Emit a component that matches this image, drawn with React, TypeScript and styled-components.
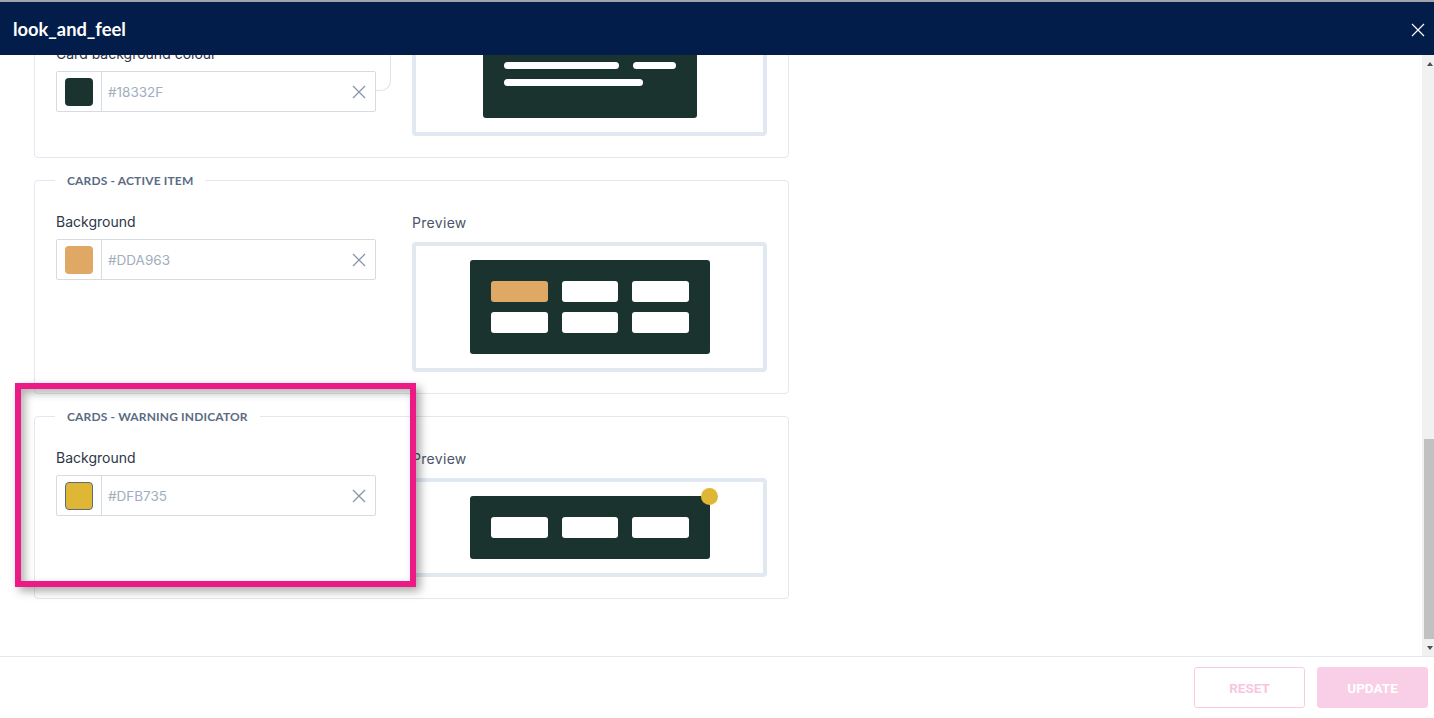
import React, { useCallback, useLayoutEffect, useRef, useState } from "react";
import styled, { createGlobalStyle } from "styled-components";

const GlobalStyle = createGlobalStyle`
  html, body { margin: 0; padding: 0; height: 100%; }
  body {
    background: #9fa3aa;
    font-family: Inter, "Liberation Sans", sans-serif;
    overflow: hidden;
  }
  *, *::before, *::after { box-sizing: border-box; }
`;

const Modal = styled.div`
  margin-top: 2px;
  height: 716px;
  display: flex;
  flex-direction: column;
  background: #ffffff;
`;

const Header = styled.header`
  height: 53px;
  flex: none;
  background: #031d4b;
  display: flex;
  align-items: center;
  justify-content: space-between;
  padding: 0 9px 0 13px;
`;

const Title = styled.h1`
  margin: 0;
  font-family: Lato, "Liberation Sans", sans-serif;
  font-size: 18.3px;
  font-weight: 700;
  color: #ffffff;
`;

const CloseButton = styled.button`
  background: none;
  border: 0;
  padding: 0;
  margin-top: 3px;
  width: 14px;
  height: 14px;
  display: flex;
  cursor: pointer;
`;

const Body = styled.div`
  flex: 1;
  min-height: 0;
  display: flex;
`;

const ScrollArea = styled.div`
  flex: 1;
  min-width: 0;
  overflow-y: auto;
  scrollbar-width: none;
  &::-webkit-scrollbar {
    display: none;
  }
`;

const Rail = styled.div`
  width: 12px;
  flex: none;
  background: #f1f1f1;
  display: flex;
  flex-direction: column;
`;

const RailArrow = styled.div<{ $down?: boolean }>`
  height: 17px;
  flex: none;
  display: flex;
  align-items: center;
  justify-content: center;
  padding-left: 3px;

  &::before {
    content: "";
    width: 0;
    height: 0;
    border-left: 3.5px solid transparent;
    border-right: 3.5px solid transparent;
    ${(p) =>
      p.$down ? "border-top: 4px solid #505050;" : "border-bottom: 4px solid #505050;"}
  }
`;

const Track = styled.div`
  position: relative;
  flex: 1;
`;

const Thumb = styled.div`
  position: absolute;
  left: 2px;
  right: 0;
  background: #c1c1c1;
`;

const Content = styled.div`
  padding: 11px 0 57px 34px;
  display: flex;
  flex-direction: column;
  align-items: flex-start;
  gap: 16px;
`;

const Section = styled.fieldset`
  width: 755px;
  min-width: 0;
  margin: 0;
  border: 1px solid #e2e8f0;
  border-radius: 4px;
  padding: 0 21px 21px 21px;
`;

const Legend = styled.legend`
  padding: 0 12px;
  margin-left: -1px;
  font-family: Lato, "Liberation Sans", sans-serif;
  font-size: 12px;
  line-height: 13px;
  font-weight: 700;
  letter-spacing: 0.15px;
  text-transform: uppercase;
  color: #5b6b84;
`;

const Grid = styled.div`
  position: relative;
  display: grid;
  grid-template-columns: 320px 355px;
  column-gap: 36px;
  align-items: start;
  padding-top: 26px;
`;

const FieldStack = styled.div`
  display: flex;
  flex-direction: column;
  gap: 20px;
`;

const Field = styled.div`
  position: relative;
  display: flex;
  flex-direction: column;
  gap: 8px;
`;

const FieldLabel = styled.label`
  font-size: 14px;
  line-height: 18px;
  color: #2d3748;
`;

const ColorInput = styled.div`
  position: relative;
  z-index: 1;
  display: flex;
  height: 41px;
  border: 1px solid #d6dbe2;
  border-radius: 2px;
  background: #ffffff;
`;

const SwatchCell = styled.div`
  width: 45px;
  flex: none;
  border-right: 1px solid #d6dbe2;
  display: flex;
  align-items: center;
  justify-content: center;
  padding-right: 1px;
`;

const Swatch = styled.span<{ $color: string; $outlined?: boolean }>`
  width: 28px;
  height: 28px;
  border-radius: 4px;
  background: ${(p) => p.$color};
  border: ${(p) => (p.$outlined ? "1px solid #5c6b80" : "none")};
`;

const HexInput = styled.input`
  flex: 1;
  min-width: 0;
  border: 0;
  outline: none;
  background: transparent;
  padding: 0 0 0 6px;
  font-family: inherit;
  font-size: 13.5px;
  color: #a0aec0;
`;

const ClearButton = styled.button`
  width: 32px;
  flex: none;
  border: 0;
  background: none;
  padding: 0;
  display: flex;
  align-items: center;
  justify-content: center;
  cursor: pointer;
`;

const CornerOutline = styled.div`
  position: absolute;
  top: -40px;
  right: -15px;
  bottom: 21px;
  left: 200px;
  border-right: 1px solid #dfe3ea;
  border-bottom: 1px solid #dfe3ea;
  border-bottom-right-radius: 10px;
`;

const PreviewColumn = styled.div`
  display: flex;
  flex-direction: column;
`;

const PreviewLabel = styled.div`
  margin: 1px 0 10px;
  font-size: 14px;
  line-height: 18px;
  letter-spacing: 0.3px;
  color: #4a5568;
`;

const PreviewBox = styled.div`
  border: 4px solid #e2e8f0;
  border-radius: 4px;
  padding: 14px;
  display: flex;
  justify-content: center;
`;

const Card = styled.div<{ $width: number; $padBottom?: number }>`
  position: relative;
  width: ${(p) => p.$width}px;
  background: #1b332f;
  border-radius: 3px;
  padding: 21px 20px ${(p) => p.$padBottom ?? 21}px 21px;
`;

const TileGrid = styled.div`
  display: grid;
  grid-template-columns: 57px 56px 57px;
  gap: 10px 14px;
`;

const Tile = styled.div<{ $color?: string }>`
  height: 21px;
  border-radius: 3px;
  background: ${(p) => p.$color ?? "#ffffff"};
`;

const WarningDot = styled.span`
  position: absolute;
  top: -8px;
  right: -8px;
  width: 17px;
  height: 17px;
  border-radius: 50%;
  background: #dfb735;
`;

const CardHero = styled.div`
  height: 100px;
  border-radius: 3px;
  background: rgba(255, 255, 255, 0.12);
  margin-bottom: 23px;
`;

const Lines = styled.div`
  display: flex;
  flex-direction: column;
  gap: 10px;
`;

const LineRow = styled.div`
  display: flex;
  gap: 14px;
`;

const Line = styled.div<{ $w: number }>`
  width: ${(p) => p.$w}px;
  height: 7px;
  border-radius: 4px;
  background: #ffffff;
`;

const HeaderMock = styled.div<{ $bg: string }>`
  width: 240px;
  height: 40px;
  border-radius: 3px;
  background: ${(p) => p.$bg};
  display: flex;
  align-items: center;
  padding: 0 14px;
`;

const HeaderMockText = styled.div`
  width: 80px;
  height: 7px;
  border-radius: 4px;
  background: #ffffff;
`;

const ButtonMock = styled.div`
  width: 110px;
  height: 36px;
  border-radius: 3px;
  background: #ec1a84;
`;

const Annotation = styled.div`
  position: absolute;
  top: -40px;
  left: -41px;
  width: 401px;
  height: 204px;
  border: 6px solid #ec1a84;
  box-shadow: 4px 4px 9px rgba(0, 0, 0, 0.35), inset 4px 4px 9px rgba(0, 0, 0, 0.3);
  pointer-events: none;
  z-index: 3;
`;

const Footer = styled.footer`
  height: 62px;
  flex: none;
  border-top: 1px solid #e2e8f0;
  display: flex;
  justify-content: flex-end;
  align-items: flex-start;
  gap: 12px;
  padding: 10px 6px 0 0;
`;

const FooterButton = styled.button<{ $primary?: boolean }>`
  width: 111px;
  height: 41px;
  border-radius: 3px;
  font-family: Roboto, "Liberation Sans", sans-serif;
  font-size: 13.5px;
  font-weight: 700;
  text-transform: uppercase;
  cursor: default;
  padding: 1px 0 0;
  border: 1px solid ${(p) => (p.$primary ? "#f8cfe6" : "#f9cbe2")};
  background: ${(p) => (p.$primary ? "#f8cfe6" : "#ffffff")};
  color: ${(p) => (p.$primary ? "#ffffff" : "#f8c6df")};
`;

const CrossIcon = ({ color, size, width }: { color: string; size: number; width: number }) => (
  <svg width={size} height={size} viewBox="0 0 14 14" fill="none">
    <path d="M1 1L13 13M13 1L1 13" stroke={color} strokeWidth={width} />
  </svg>
);

type FieldDef = { label: string; value: string; color: string; outlined?: boolean; corner?: boolean };

const ColorField = ({ label, value, color, outlined, corner }: FieldDef) => (
  <Field>
    {corner && <CornerOutline />}
    <FieldLabel>{label}</FieldLabel>
    <ColorInput>
      <SwatchCell>
        <Swatch $color={color} $outlined={outlined} />
      </SwatchCell>
      <HexInput readOnly value={value} />
      <ClearButton aria-label="Clear">
        <CrossIcon color="#8794a7" size={14} width={1.3} />
      </ClearButton>
    </ColorInput>
  </Field>
);

const SettingsSection = ({
  title,
  fields,
  preview,
  children,
}: {
  title: string;
  fields: FieldDef[];
  preview: React.ReactNode;
  children?: React.ReactNode;
}) => (
  <Section>
    <Legend>{title}</Legend>
    <Grid>
      <FieldStack>
        {fields.map((f) => (
          <ColorField key={f.label} {...f} />
        ))}
      </FieldStack>
      <PreviewColumn>
        <PreviewLabel>Preview</PreviewLabel>
        <PreviewBox>{preview}</PreviewBox>
      </PreviewColumn>
      {children}
    </Grid>
  </Section>
);

export default function App() {
  const areaRef = useRef<HTMLDivElement>(null);
  const trackRef = useRef<HTMLDivElement>(null);
  const [thumb, setThumb] = useState({ top: 0, height: 0 });

  const measure = useCallback(() => {
    const area = areaRef.current;
    const track = trackRef.current;
    if (!area || !track) return;
    const trackH = track.clientHeight;
    const ratio = area.clientHeight / area.scrollHeight;
    setThumb({
      top: (trackH * area.scrollTop) / area.scrollHeight,
      height: Math.min(trackH, trackH * ratio),
    });
  }, []);

  useLayoutEffect(() => {
    const area = areaRef.current;
    if (area) area.scrollTop = area.scrollHeight;
    measure();
  }, [measure]);

  return (
    <>
      <GlobalStyle />
      <Modal>
        <Header>
          <Title>look_and_feel</Title>
          <CloseButton aria-label="Close">
            <CrossIcon color="#ffffff" size={14} width={1.2} />
          </CloseButton>
        </Header>
        <Body>
          <ScrollArea ref={areaRef} onScroll={measure}>
            <Content>
              <SettingsSection
                title="General"
                fields={[
                  { label: "Primary colour", value: "#EC1A84", color: "#ec1a84" },
                  { label: "Secondary colour", value: "#031D4C", color: "#031d4c" },
                  { label: "Text colour", value: "#2D3748", color: "#2d3748" },
                ]}
                preview={
                  <HeaderMock $bg="#031d4c">
                    <HeaderMockText />
                  </HeaderMock>
                }
              />
              <SettingsSection
                title="Header"
                fields={[
                  { label: "Background", value: "#031D4C", color: "#031d4c" },
                  { label: "Text colour", value: "#FFFFFF", color: "#ffffff", outlined: true },
                ]}
                preview={
                  <HeaderMock $bg="#031d4c">
                    <HeaderMockText />
                  </HeaderMock>
                }
              />
              <SettingsSection
                title="Buttons"
                fields={[
                  { label: "Primary colour", value: "#EC1A84", color: "#ec1a84" },
                  { label: "Hover colour", value: "#C4146D", color: "#c4146d" },
                  { label: "Text colour", value: "#FFFFFF", color: "#ffffff", outlined: true },
                ]}
                preview={<ButtonMock />}
              />
              <SettingsSection
                title="Cards"
                fields={[
                  { label: "Card title colour", value: "#FFFFFF", color: "#ffffff", outlined: true },
                  { label: "Card text colour", value: "#FFFFFF", color: "#ffffff", outlined: true },
                  { label: "Card background colour", value: "#18332F", color: "#1b332f", corner: true },
                ]}
                preview={
                  <Card $width={214} $padBottom={32}>
                    <CardHero />
                    <Lines>
                      <LineRow>
                        <Line $w={115} />
                        <Line $w={43} />
                      </LineRow>
                      <LineRow>
                        <Line $w={139} />
                      </LineRow>
                    </Lines>
                  </Card>
                }
              />
              <SettingsSection
                title="Cards - Active item"
                fields={[{ label: "Background", value: "#DDA963", color: "#dfa965" }]}
                preview={
                  <Card $width={240}>
                    <TileGrid>
                      <Tile $color="#dfa965" />
                      <Tile />
                      <Tile />
                      <Tile />
                      <Tile />
                      <Tile />
                    </TileGrid>
                  </Card>
                }
              />
              <SettingsSection
                title="Cards - Warning indicator"
                fields={[{ label: "Background", value: "#DFB735", color: "#dfb735", outlined: true }]}
                preview={
                  <Card $width={240}>
                    <WarningDot />
                    <TileGrid>
                      <Tile />
                      <Tile />
                      <Tile />
                    </TileGrid>
                  </Card>
                }
              >
                <Annotation />
              </SettingsSection>
            </Content>
          </ScrollArea>
          <Rail>
            <RailArrow />
            <Track ref={trackRef}>
              <Thumb style={{ top: thumb.top, height: thumb.height }} />
            </Track>
            <RailArrow $down />
          </Rail>
        </Body>
        <Footer>
          <FooterButton>Reset</FooterButton>
          <FooterButton $primary>Update</FooterButton>
        </Footer>
      </Modal>
    </>
  );
}
